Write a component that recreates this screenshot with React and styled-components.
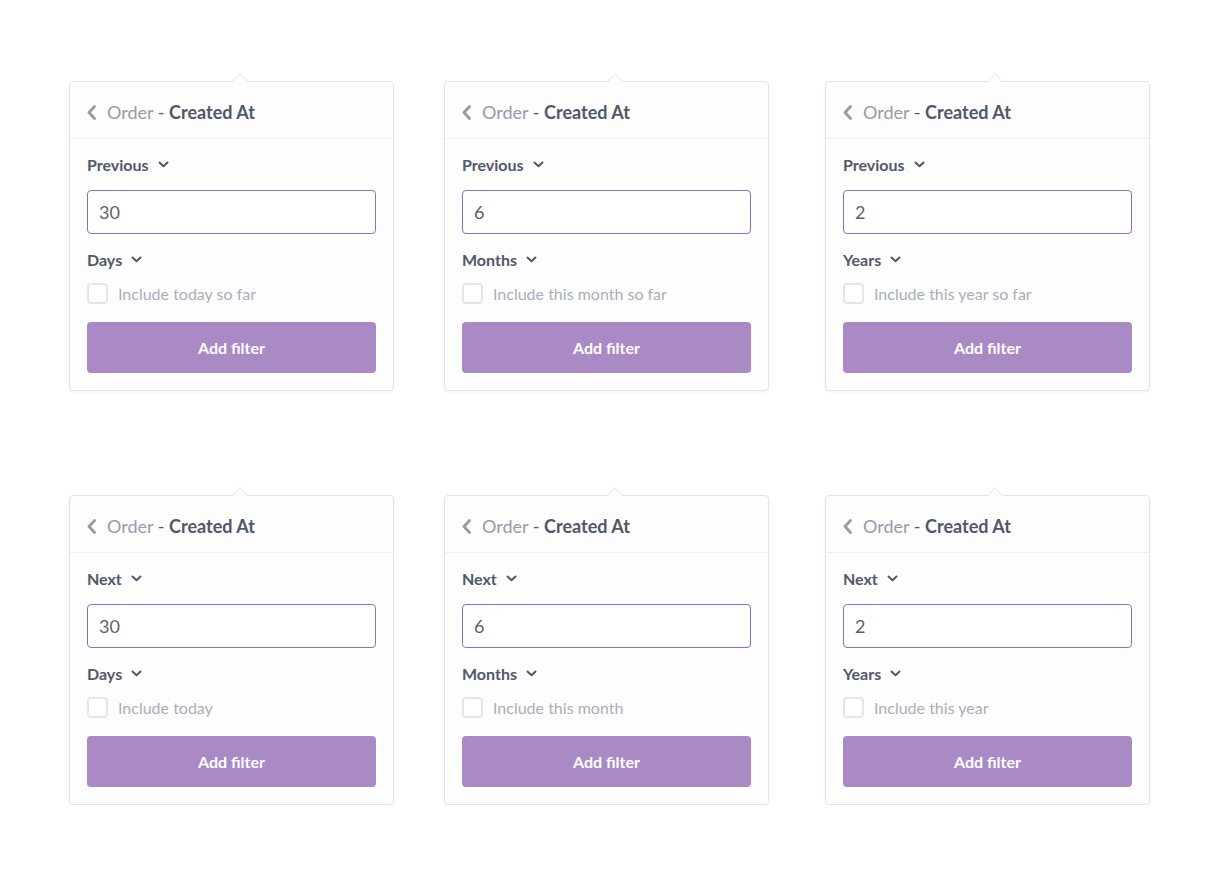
import React from "react";
import styled, { createGlobalStyle } from "styled-components";

const colors = {
  dark: "#505869",
  medium: "#959bab",
  light: "#a9aebb",
  border: "#e4e4e6",
  divider: "#eeeef0",
  filter: "#a98ac5",
  inputBorder: "#9568cb",
};

const GlobalStyle = createGlobalStyle`
  body {
    margin: 0;
    background: #ffffff;
    font-family: Lato, "Noto Sans", sans-serif;
    -webkit-font-smoothing: antialiased;
  }
`;

const Page = styled.div`
  padding: 81px 0 0 69px;
  display: grid;
  grid-template-columns: 375px 381px 325px;
  row-gap: 104px;
`;

const Card = styled.div`
  position: relative;
  width: 325px;
  box-sizing: border-box;
  background: #fdfdfd;
  border: 1px solid ${colors.border};
  border-radius: 4px;
  box-shadow: 0 1px 3px rgba(0, 0, 0, 0.06);

  &::before,
  &::after {
    content: "";
    position: absolute;
    left: ${(p) => p.$arrow}px;
    width: 0;
    height: 0;
    border-style: solid;
  }
  &::before {
    top: -9px;
    border-width: 0 8px 9px 8px;
    border-color: transparent transparent ${colors.border} transparent;
  }
  &::after {
    top: -8px;
    left: ${(p) => p.$arrow + 1}px;
    border-width: 0 7px 8px 7px;
    border-color: transparent transparent #fdfdfd transparent;
  }
`;

const Header = styled.div`
  height: 57px;
  box-sizing: border-box;
  display: flex;
  align-items: center;
  gap: 11px;
  padding: 4px 17px 0 17px;
  border-bottom: 1px solid ${colors.divider};
  font-size: 18px;
`;

const Crumb = styled.span`
  color: ${colors.medium};
`;

const Field = styled.span`
  color: ${colors.dark};
  font-weight: ${(p) => (p.$sep ? 400 : 700)};
`;

const Body = styled.div`
  padding: 15px 17px 17px;
  display: flex;
  flex-direction: column;
`;

const Select = styled.div`
  display: flex;
  align-items: center;
  gap: 9px;
  height: 20px;
  font-size: 16px;
  font-weight: 700;
  color: ${colors.dark};
  margin-bottom: ${(p) => p.$mb}px;
`;

const Input = styled.div`
  height: 44px;
  box-sizing: border-box;
  border: 1px solid ${colors.inputBorder};
  border-radius: 4px;
  background: #ffffff;
  display: flex;
  align-items: center;
  padding: 0 11px;
  font-size: 18px;
  color: #5b6070;
  margin-bottom: 15px;
`;

const CheckRow = styled.label`
  display: flex;
  align-items: center;
  gap: 10px;
  height: 21px;
  font-size: 16px;
  color: ${colors.light};
  margin-bottom: 18px;
`;

const Box = styled.span`
  width: 21px;
  height: 21px;
  box-sizing: border-box;
  border: 2px solid #e6e6e8;
  border-radius: 4px;
  background: #ffffff;
`;

const Button = styled.button`
  height: 51px;
  border: none;
  border-radius: 4px;
  background: ${colors.filter};
  color: #ffffff;
  font-family: Lato, "Noto Sans", sans-serif;
  font-size: 16px;
  font-weight: 700;
`;

const ChevronLeft = () => (
  <svg width="9" height="15" viewBox="0 0 9 15" fill="none">
    <path
      d="M7.5 1.5 L2 7.5 L7.5 13.5"
      stroke={colors.medium}
      strokeWidth="2.8"
      strokeLinecap="round"
      strokeLinejoin="round"
    />
  </svg>
);

const ChevronDown = () => (
  <svg width="11" height="7" viewBox="0 0 11 7" fill="none">
    <path
      d="M1.5 1.5 L5.5 5.3 L9.5 1.5"
      stroke={colors.dark}
      strokeWidth="2"
      strokeLinecap="round"
      strokeLinejoin="round"
    />
  </svg>
);

const FilterCard = ({ op, value, unit, include, arrow }) => (
  <Card $arrow={arrow}>
    <Header>
      <ChevronLeft />
      <div>
        <Crumb>Order</Crumb>
        <Field $sep> - </Field>
        <Field>Created At</Field>
      </div>
    </Header>
    <Body>
      <Select $mb={16}>
        {op}
        <ChevronDown />
      </Select>
      <Input>{value}</Input>
      <Select $mb={14}>
        {unit}
        <ChevronDown />
      </Select>
      <CheckRow>
        <Box />
        {include}
      </CheckRow>
      <Button>Add filter</Button>
    </Body>
  </Card>
);

const cards = [
  { op: "Previous", value: "30", unit: "Days", include: "Include today so far", arrow: 162 },
  { op: "Previous", value: "6", unit: "Months", include: "Include this month so far", arrow: 162 },
  { op: "Previous", value: "2", unit: "Years", include: "Include this year so far", arrow: 161 },
  { op: "Next", value: "30", unit: "Days", include: "Include today", arrow: 162 },
  { op: "Next", value: "6", unit: "Months", include: "Include this month", arrow: 162 },
  { op: "Next", value: "2", unit: "Years", include: "Include this year", arrow: 161 },
];

const App = () => (
  <>
    <GlobalStyle />
    <Page>
      {cards.map((c, i) => (
        <FilterCard key={i} {...c} />
      ))}
    </Page>
  </>
);

export default App;
